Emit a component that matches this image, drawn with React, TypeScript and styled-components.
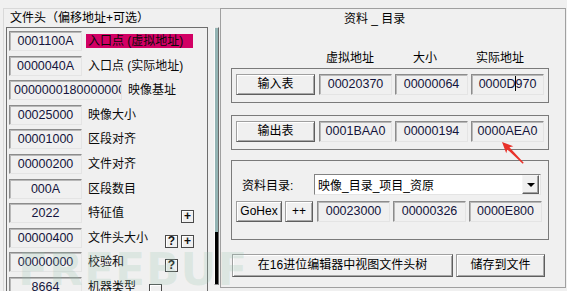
import React from 'react'
import styled, { createGlobalStyle } from 'styled-components'

const GlobalStyle = createGlobalStyle`
  html, body {
    margin: 0;
    padding: 0;
    background: #f0f0f0;
  }
  body {
    font-family: "Liberation Sans", "Noto Sans CJK SC", sans-serif;
    font-size: 12px;
    color: #000;
  }
  * {
    box-sizing: border-box;
  }
`

const Window = styled.div`
  position: relative;
  display: flex;
  width: 567px;
  height: 291px;
  padding-top: 8px;
  overflow: hidden;
  background: #f0f0f0;
`

const LeftPanel = styled.div`
  display: flex;
  flex-direction: column;
  margin-left: 3px;
  width: 217px;
  border-top: 1px solid #d9d9d9;
  border-left: 1px solid #d9d9d9;
`

const PanelTitle = styled.div`
  height: 19px;
  line-height: 18px;
  padding-left: 6px;
  white-space: nowrap;
`

const LeftBody = styled.div`
  display: flex;
  flex: 1;
`

const InnerBox = styled.div`
  margin-left: 2px;
  width: 202px;
  height: 280px;
  padding: 3px 0 0 2px;
  border: 1px solid #6e6e6e;
  border-bottom: none;
  display: flex;
  flex-direction: column;
  gap: 4.6px;
`

const ScrollTrack = styled.div`
  margin-left: 6px;
  width: 5px;
  height: 258px;
  display: flex;
  flex-direction: column;
  border-left: 1px solid #fbfbfb;
  border-right: 1px solid #6a6a6a;
  border-top: 1px solid #e8e8e8;
  border-bottom: 1px solid #8a8a8a;
`

const ScrollFill = styled.div<{ $dark?: boolean }>`
  flex: ${p => (p.$dark ? '0 0 52px' : '1')};
  background: ${p => (p.$dark ? '#000' : '#94b4b4')};
`

const FieldRow = styled.div`
  display: flex;
  align-items: center;
  height: 20px;
  flex-shrink: 0;
`

const Field = styled.div<{ $w?: number; $h?: number; $left?: boolean }>`
  flex-shrink: 0;
  width: ${p => p.$w ?? 73}px;
  height: ${p => p.$h ?? 20}px;
  padding: ${p => (p.$left ? '0 0 0 4px' : '0')};
  text-align: ${p => (p.$left ? 'left' : 'center')};
  line-height: ${p => (p.$h ?? 20) - 2}px;
  font-size: 12.5px;
  color: #14143c;
  white-space: nowrap;
  overflow: hidden;
  background: #f0f0f0;
  border: 1px solid;
  border-color: #8c8c8c #e4e4e4 #e4e4e4 #8c8c8c;
  box-shadow: inset 1px 1px #b8b8b8;
`

const Caret = styled.span`
  display: inline-block;
  width: 1px;
  height: 15px;
  margin-right: -1px;
  vertical-align: -3px;
  background: #000;
`

const RowLabel = styled.span<{ $hl?: boolean }>`
  margin-left: ${p => (p.$hl ? '4px' : '6px')};
  padding: ${p => (p.$hl ? '0 10px 0 2px' : '0')};
  height: 14px;
  line-height: 14px;
  white-space: nowrap;
  background: ${p => (p.$hl ? '#d20064' : 'transparent')};
  color: #0a0a0a;
`

const Tools = styled.div`
  margin-left: auto;
  margin-right: 13px;
  align-self: flex-end;
  display: flex;
  gap: 3px;
`

const TinyButton = styled.div<{ $blank?: boolean }>`
  width: 13px;
  height: 13px;
  line-height: 11px;
  text-align: center;
  font-size: 12px;
  font-weight: bold;
  color: #111;
  visibility: ${p => (p.$blank ? 'hidden' : 'visible')};
  border: 1px solid #4a4a4a;
  box-shadow: inset 1px 1px #fff;
  background: #f0f0f0;
`

const RightPanel = styled.div`
  margin-left: 0px;
  width: 346px;
  height: 280px;
  padding: 0 0 0 10px;
  border: 1px solid #a0a0a0;
  display: flex;
  flex-direction: column;
`

const CenterTitle = styled.div`
  height: 20px;
  line-height: 20px;
  margin-left: 113px;
  white-space: nowrap;
`

const Headers = styled.div`
  display: flex;
  gap: 3px;
  margin-top: 21px;
  padding-left: 83px;
  height: 16px;
  line-height: 16px;
`

const HeaderCell = styled.div`
  width: 72px;
  text-align: center;
  white-space: nowrap;
`

const Group = styled.div<{ $h: number; $mt: number }>`
  width: 318px;
  height: ${p => p.$h}px;
  margin-top: ${p => p.$mt}px;
  border: 1px solid #7a7a7a;
  display: flex;
  flex-direction: column;
`

const GroupRow = styled.div<{ $pt?: number; $pl?: number }>`
  display: flex;
  align-items: center;
  padding-top: ${p => p.$pt ?? 5}px;
  padding-left: ${p => p.$pl ?? 4}px;
`

const Button = styled.div<{ $w: number; $h?: number; $ml?: number }>`
  flex-shrink: 0;
  width: ${p => p.$w}px;
  height: ${p => p.$h ?? 21}px;
  margin-left: ${p => p.$ml ?? 0}px;
  line-height: ${p => (p.$h ?? 21) - 2}px;
  text-align: center;
  white-space: nowrap;
  font-size: 12px;
  background: #f0f0f0;
  border: 1px solid;
  border-color: #a0a0a0 #5e5e5e #5e5e5e #a0a0a0;
  box-shadow: inset 1px 1px #fff, inset -1px -1px #a8a8a8;
`

const Fields = styled.div<{ $ml: number }>`
  display: flex;
  gap: 3px;
  margin-left: ${p => p.$ml}px;
`

const SelectLabel = styled.div`
  margin-left: 10px;
  width: 72px;
  white-space: nowrap;
`

const Select = styled.div`
  display: flex;
  align-items: center;
  width: 227px;
  height: 21px;
  padding: 0 1px 0 3px;
  background: #fff;
  border: 1px solid;
  border-color: #828282 #e4e4e4 #e4e4e4 #828282;
`

const SelectText = styled.span`
  flex: 1;
  white-space: nowrap;
`

const DropButton = styled.div`
  display: flex;
  align-items: center;
  justify-content: center;
  width: 17px;
  height: 19px;
  background: #f0f0f0;
  border: 1px solid;
  border-color: #f5f5f5 #5e5e5e #5e5e5e #f5f5f5;
  box-shadow: inset -1px -1px #a0a0a0;
`

const DropArrow = styled.div`
  width: 0;
  height: 0;
  border-left: 4px solid transparent;
  border-right: 4px solid transparent;
  border-top: 4px solid #000;
`

const BottomRow = styled.div`
  display: flex;
  gap: 3px;
  margin-top: 14px;
  padding-left: 1px;
`

const Watermark = styled.div`
  position: absolute;
  left: 18px;
  top: 244px;
  font-family: "DejaVu Sans", sans-serif;
  font-weight: bold;
  font-size: 44px;
  letter-spacing: 1px;
  color: rgba(150, 195, 175, 0.22);
  pointer-events: none;
  white-space: nowrap;
`

const ArrowSvg = styled.svg`
  position: absolute;
  left: 495px;
  top: 136px;
  overflow: visible;
  pointer-events: none;
`

type Row = {
  v: string
  l: string
  hl?: boolean
  wide?: boolean
  tools?: (string | null)[]
}

const rows: Row[] = [
  { v: '0001100A', l: '入口点 (虚拟地址)', hl: true },
  { v: '0000040A', l: '入口点 (实际地址)' },
  { v: '0000000180000000', l: '映像基址', wide: true },
  { v: '00025000', l: '映像大小' },
  { v: '00001000', l: '区段对齐' },
  { v: '00000200', l: '文件对齐' },
  { v: '000A', l: '区段数目' },
  { v: '2022', l: '特征值', tools: [null, null, '+'] },
  { v: '00000400', l: '文件头大小', tools: [null, '?', '+'] },
  { v: '00000000', l: '校验和', tools: [null, '?', null] },
  { v: '8664', l: '机器类型', tools: ['', null, null] },
]

const App = () => {
  return (
    <>
      <GlobalStyle />
      <Window>
        <LeftPanel>
          <PanelTitle>文件头（偏移地址+可选）</PanelTitle>
          <LeftBody>
            <InnerBox>
              {rows.map(r => (
                <FieldRow key={r.l}>
                  <Field $w={r.wide ? 113 : 73} $left={r.wide}>{r.v}</Field>
                  <RowLabel $hl={r.hl}>{r.l}</RowLabel>
                  {r.tools && (
                    <Tools>
                      {r.tools.map((t, i) => (
                        <TinyButton key={i} $blank={t === null}>{t}</TinyButton>
                      ))}
                    </Tools>
                  )}
                </FieldRow>
              ))}
            </InnerBox>
            <ScrollTrack>
              <ScrollFill />
              <ScrollFill $dark />
            </ScrollTrack>
          </LeftBody>
        </LeftPanel>

        <RightPanel>
          <CenterTitle>资料 _ 目录</CenterTitle>
          <Headers>
            <HeaderCell>虚拟地址</HeaderCell>
            <HeaderCell>大小</HeaderCell>
            <HeaderCell>实际地址</HeaderCell>
          </Headers>

          <Group $h={35} $mt={2}>
            <GroupRow>
              <Button $w={79}>输入表</Button>
              <Fields $ml={4}>
                <Field $h={21}>00020370</Field>
                <Field $h={21}>00000064</Field>
                <Field $h={21}>0000D<Caret />970</Field>
              </Fields>
            </GroupRow>
          </Group>

          <Group $h={35} $mt={12}>
            <GroupRow>
              <Button $w={79}>输出表</Button>
              <Fields $ml={4}>
                <Field $h={21}>0001BAA0</Field>
                <Field $h={21}>00000194</Field>
                <Field $h={21}>0000AEA0</Field>
              </Fields>
            </GroupRow>
          </Group>

          <Group $h={80} $mt={10}>
            <GroupRow $pt={13} $pl={0}>
              <SelectLabel>资料目录:</SelectLabel>
              <Select>
                <SelectText>映像_目录_项目_资原</SelectText>
                <DropButton>
                  <DropArrow />
                </DropButton>
              </Select>
            </GroupRow>
            <GroupRow $pt={6}>
              <Button $w={46}>GoHex</Button>
              <Button $w={28} $ml={3}>++</Button>
              <Fields $ml={4}>
                <Field $h={21}>00023000</Field>
                <Field $h={21}>00000326</Field>
                <Field $h={21}>0000E800</Field>
              </Fields>
            </GroupRow>
          </Group>

          <BottomRow>
            <Button $w={221} $h={23}>在16进位编辑器中视图文件头树</Button>
            <Button $w={89} $h={23}>储存到文件</Button>
          </BottomRow>
        </RightPanel>

        <Watermark>FREEBUF</Watermark>

        <ArrowSvg width="35" height="35" viewBox="0 0 35 35">
          <polygon
            transform="translate(7 6) rotate(45)"
            points="0,0 11,-5 9,-1.5 30,-0.7 30,0.7 9,1.5 11,5"
            fill="#e8322a"
          />
        </ArrowSvg>
      </Window>
    </>
  )
}

export default App
